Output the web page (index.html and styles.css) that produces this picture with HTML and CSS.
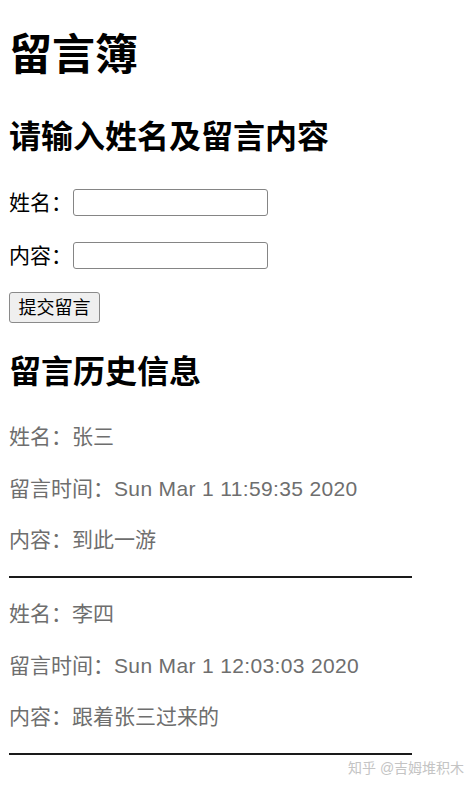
FILE: index.html
```html
<!DOCTYPE html>
<html lang="zh-CN">
<head>
    <meta charset="UTF-8">
    <title>留言簿</title>
    <link rel="stylesheet" href="styles.css">
</head>
<body>
    <h1>留言簿</h1>
    <h2>请输入姓名及留言内容</h2>
    <form class="msg-form">
        <div class="form-row">
            <label for="name">姓名：</label><input type="text" id="name">
        </div>
        <div class="form-row">
            <label for="content">内容：</label><input type="text" id="content">
        </div>
        <button type="button">提交留言</button>
    </form>
    <h2 class="history-title">留言历史信息</h2>
    <div class="history">
        <div class="msg">
            <p>姓名：张三</p>
            <p>留言时间：<span class="time">Sun Mar 1 11:59:35 2020</span></p>
            <p>内容：到此一游</p>
            <hr>
        </div>
        <div class="msg">
            <p>姓名：李四</p>
            <p>留言时间：<span class="time">Sun Mar 1 12:03:03 2020</span></p>
            <p class="last">内容：跟着张三过来的</p>
            <hr>
        </div>
    </div>
    <div class="watermark">知乎 @吉姆堆积木</div>
</body>
</html>
```

FILE: styles.css
```css
body { margin: 0; padding: 0 9px; font-family: "Liberation Sans", "Noto Sans CJK SC", sans-serif; color: #000; background: #fff; position: relative; height: 788px; overflow: hidden; }
h1 { font-size: 43px; line-height: 50px; margin: 30px 0 0; font-weight: bold; }
h2 { font-size: 32px; line-height: 40px; margin: 37px 0 0; font-weight: bold; }
.msg-form { margin-top: 32px; }
.form-row { display: flex; align-items: center; margin-bottom: 26px; font-size: 21px; line-height: 27px; }
.form-row label { width: 64px; }
.form-row input { width: 195px; height: 27px; box-sizing: border-box; border: 1px solid #858585; border-radius: 3px; padding: 0 4px; font-size: 16px; margin: 0; }
.form-row + .form-row { margin-bottom: 23px; }
button { width: 91px; height: 31px; box-sizing: border-box; font-family: inherit; font-size: 18px; line-height: 20px; background: #efefef; border: 1px solid #8a8a8a; border-radius: 3px; padding: 0; color: #000; }
.history-title { margin-top: 29px; }
.history { margin-top: 30px; }
.msg p { font-size: 21px; line-height: 30px; margin: 0 0 21.5px; color: #6e6e6e; }
.msg p.last { margin-top: 1px; }
.time { letter-spacing: 0.35px; }
hr { width: 403px; margin: -0.5px 0 21px; border: 0; border-top: 2px solid #1a1a1a; }
.watermark { position: absolute; left: 348px; top: 759px; font-size: 14px; line-height: 18px; color: #c4c4c4; white-space: nowrap; }
```
